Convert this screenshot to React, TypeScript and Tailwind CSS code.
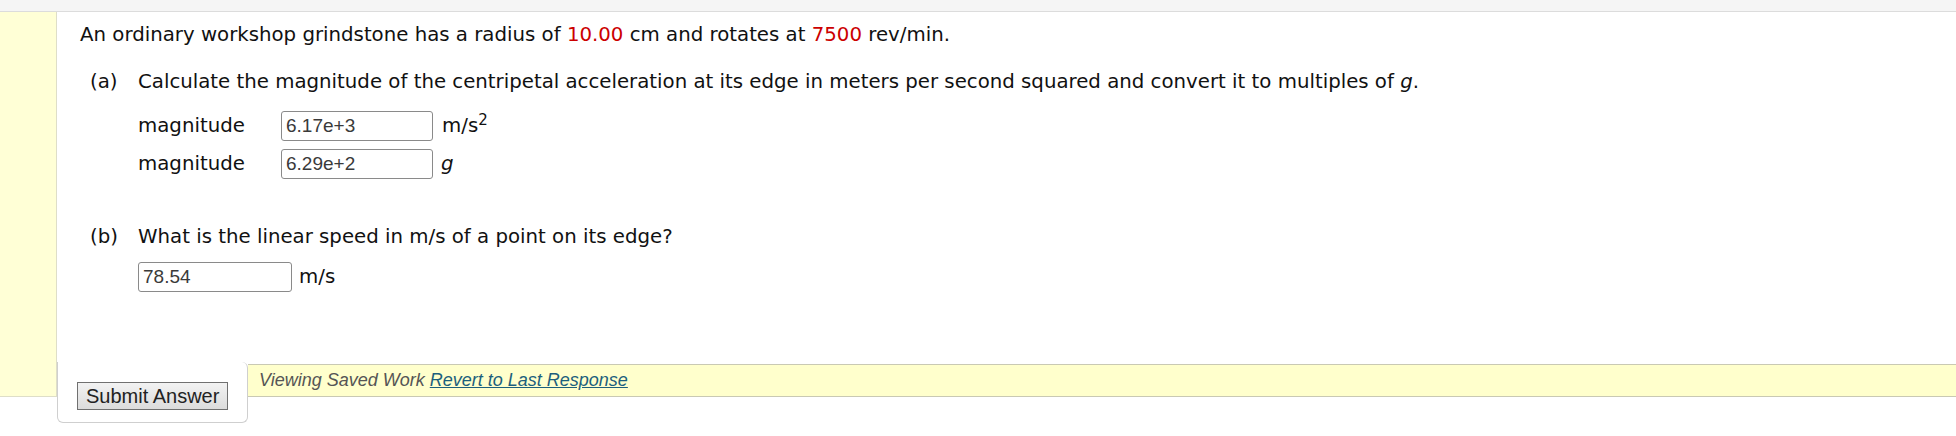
import React from "react";

const body = { fontFamily: '"DejaVu Sans", Verdana, sans-serif' };

function Field({ value, w = "w-[152px]" }: { value: string; w?: string }) {
  return (
    <div
      className={`${w} h-[30px] border border-[#8a8a8a] rounded-[3px] bg-white flex items-center pl-[4px] text-[19px] text-[#3a3a3a] font-['Liberation_Sans',Arial,sans-serif]`}
    >
      {value}
    </div>
  );
}

export default function App() {
  return (
    <div className="w-[1956px] h-[436px] bg-white text-[#111] overflow-hidden" style={body}>
      <div className="h-[12px] bg-[#f5f5f5] border-b border-[#dcdcdc]" />
      <div className="flex items-start">
        <div className="w-[57px] h-[385px] bg-[#ffffd6] border-r border-b border-[#dedec8] shrink-0" />
        <div className="flex-1 flex flex-col">
          <div className="pl-[23px] pt-[11px] text-[19.75px] leading-[24px]">
            <p>
              An ordinary workshop grindstone has a radius of{" "}
              <span className="text-[#cc0000]">10.00</span> cm and rotates at{" "}
              <span className="text-[#cc0000]">7500</span> rev/min.
            </p>
            <div className="mt-[23px] ml-[10px] flex">
              <span className="w-[48px] shrink-0">(a)</span>
              <div className="flex flex-col">
                <p>
                  Calculate the magnitude of the centripetal acceleration at its edge in meters per second squared and
                  convert it to multiples of <i>g</i>.
                </p>
                <div className="mt-[17px] flex items-center">
                  <span className="w-[143px]">magnitude</span>
                  <Field value="6.17e+3" />
                  <span className="ml-[9px]">
                    m/s<sup className="text-[15px]">2</sup>
                  </span>
                </div>
                <div className="mt-[8px] flex items-center">
                  <span className="w-[143px]">magnitude</span>
                  <Field value="6.29e+2" />
                  <span className="ml-[8px] italic">g</span>
                </div>
              </div>
            </div>
            <div className="mt-[46px] ml-[10px] flex">
              <span className="w-[48px] shrink-0">(b)</span>
              <div className="flex flex-col">
                <p>What is the linear speed in m/s of a point on its edge?</p>
                <div className="mt-[13px] flex items-center">
                  <Field value="78.54" w="w-[154px]" />
                  <span className="ml-[7px]">m/s</span>
                </div>
              </div>
            </div>
          </div>
        </div>
      </div>
      <div className="flex items-start -mt-[35px] relative">
        <div className="w-[57px] shrink-0" />
        <div className="w-[191px] h-[61px] bg-white border-l border-r border-b border-[#cfcfcf] rounded-b-[6px] rounded-tr-[6px] shrink-0 pl-[19px] pt-[20px]">
          <button className="h-[28px] px-[8px] border border-[#707070] bg-gradient-to-b from-[#f2f2f2] to-[#dcdcdc] text-[20px] leading-[24px] text-[#222] font-['Liberation_Sans',Arial,sans-serif]">
            Submit Answer
          </button>
        </div>
        <div className="flex-1 mt-[2px] h-[33px] bg-[#ffffcc] border-y border-[#c9c9b3] flex items-center pl-[11px] italic text-[18px] text-[#555] font-['Liberation_Sans',Arial,sans-serif]">
          Viewing Saved Work&nbsp;<span className="underline text-[#1d5f7d]">Revert to Last Response</span>
        </div>
      </div>
    </div>
  );
}
